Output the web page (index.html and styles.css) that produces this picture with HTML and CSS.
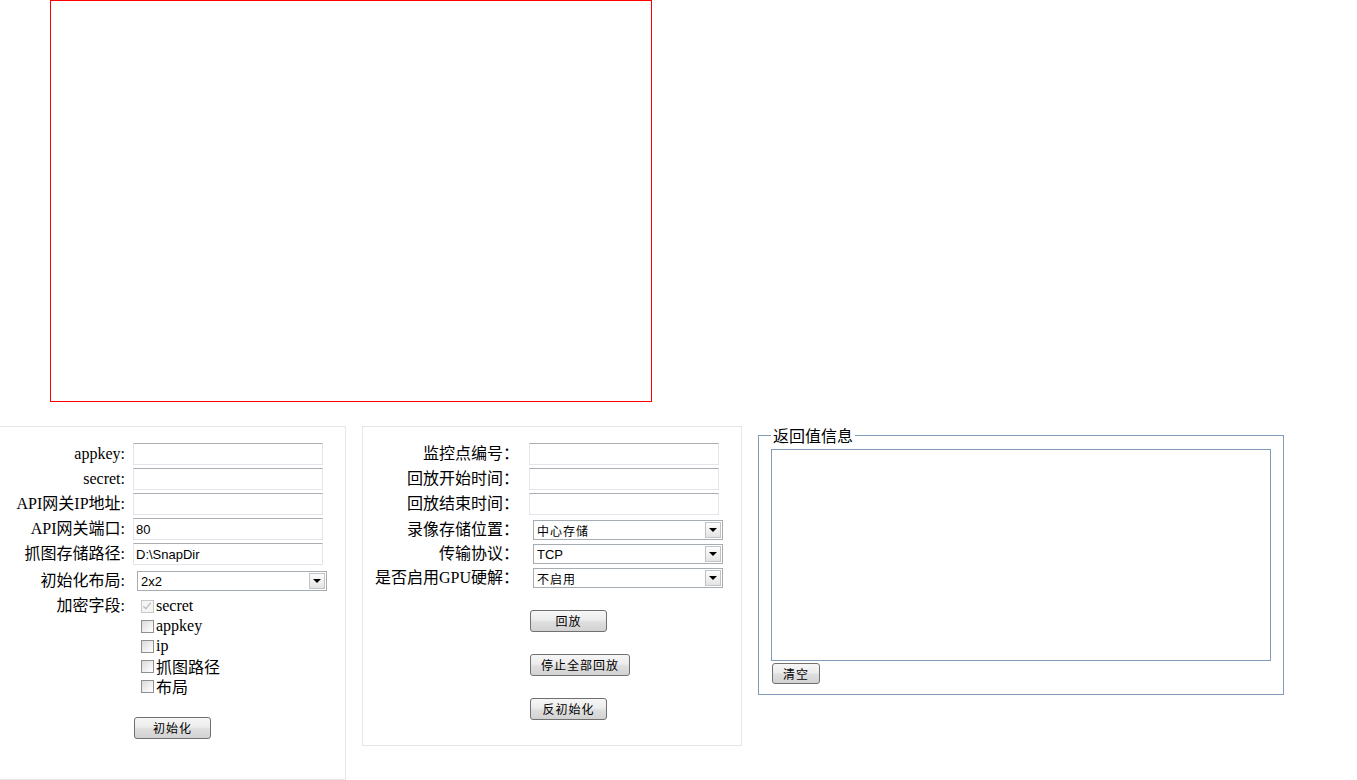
FILE: index.html
```html
<!DOCTYPE html>
<html lang="zh-CN">
<head>
<meta charset="utf-8">
<title>视频回放</title>
<link rel="stylesheet" href="styles.css">
</head>
<body>
<div class="player"></div>
<div class="controls">
  <section class="panel panel-init">
    <div class="row"><label class="lbl">appkey:</label><input class="txt" type="text"></div>
    <div class="row"><label class="lbl">secret:</label><input class="txt" type="text"></div>
    <div class="row"><label class="lbl">API网关IP地址:</label><input class="txt" type="text"></div>
    <div class="row"><label class="lbl">API网关端口:</label><input class="txt" type="text" value="80"></div>
    <div class="row"><label class="lbl">抓图存储路径:</label><input class="txt" type="text" value="D:\SnapDir"></div>
    <div class="row row-select"><label class="lbl">初始化布局:</label><span class="sel"><select><option>2x2</option></select></span></div>
    <div class="row row-checks"><label class="lbl">加密字段:</label>
      <div class="checks">
        <label class="chk"><input type="checkbox" checked disabled><span>secret</span></label>
        <label class="chk"><input type="checkbox"><span>appkey</span></label>
        <label class="chk"><input type="checkbox"><span>ip</span></label>
        <label class="chk"><input type="checkbox"><span>抓图路径</span></label>
        <label class="chk"><input type="checkbox"><span>布局</span></label>
      </div>
    </div>
    <div class="row row-btn"><span></span><button class="btn">初始化</button></div>
  </section>

  <section class="panel panel-play">
    <div class="row"><label class="lbl">监控点编号：</label><input class="txt" type="text"></div>
    <div class="row"><label class="lbl">回放开始时间：</label><input class="txt" type="text"></div>
    <div class="row"><label class="lbl">回放结束时间：</label><input class="txt" type="text"></div>
    <div class="row row-select"><label class="lbl">录像存储位置：</label><span class="sel"><select class="cjk"><option>中心存储</option></select></span></div>
    <div class="row row-select"><label class="lbl">传输协议：</label><span class="sel"><select><option>TCP</option></select></span></div>
    <div class="row row-select"><label class="lbl">是否启用GPU硬解：</label><span class="sel"><select class="cjk"><option>不启用</option></select></span></div>
    <div class="row row-btn first"><span></span><button class="btn">回放</button></div>
    <div class="row row-btn"><span></span><button class="btn">停止全部回放</button></div>
    <div class="row row-btn"><span></span><button class="btn">反初始化</button></div>
  </section>

  <fieldset class="result">
    <legend>返回值信息</legend>
    <textarea class="log"></textarea>
    <button class="btn btn-clear">清空</button>
  </fieldset>
</div>
</body>
</html>
```
FILE: styles.css
```css
html, body {
  margin: 0;
  padding: 0;
  background: #ffffff;
}
body {
  font-family: "Liberation Serif", "Noto Sans CJK SC", serif;
  font-size: 16px;
  color: #000;
}
.player {
  width: 600px;
  height: 400px;
  margin-left: 50px;
  border: 1px solid #ff0000;
}
.controls {
  display: flex;
  align-items: flex-start;
  gap: 16px;
  margin-top: 24px;
}
.panel {
  box-sizing: border-box;
  border: 1px solid #e6e6e6;
  padding-top: 16px;
}
.panel-init {
  width: 346px;
  height: 354px;
  border-left: 0;
}
.panel-play {
  width: 380px;
  height: 320px;
}
.row {
  display: grid;
  align-items: center;
  height: 22px;
  margin-top: 3px;
}
.row:first-child { margin-top: 0; }
.panel-init .row {
  grid-template-columns: 125px 1fr;
  column-gap: 8px;
}
.panel-play .row {
  grid-template-columns: 166px 1fr;
  column-gap: 0;
}
.lbl {
  text-align: right;
  white-space: nowrap;
  line-height: 20px;
}
.panel-play .lbl {
  padding-right: 10px;
}
.txt {
  box-sizing: border-box;
  width: 190px;
  height: 22px;
  margin: 0;
  padding: 0 2px;
  border: 1px solid #e2e6ec;
  border-top-color: #abadb3;
  font-family: "Liberation Sans", Arial, sans-serif;
  font-size: 13px;
  color: #000;
  outline: none;
}
.panel-init .row-select {
  margin-top: 6px;
  height: 20px;
}
.panel-play .row-select {
  height: 24px;
  margin-top: 0;
}
.panel-play .row-select:nth-child(4) { margin-top: 3px; }
.sel {
  position: relative;
  display: inline-block;
  width: 190px;
  height: 20px;
  margin-left: 4px;
}
.sel select {
  box-sizing: border-box;
  appearance: none;
  -webkit-appearance: none;
  width: 190px;
  height: 20px;
  margin: 0;
  padding: 0 0 0 3px;
  border: 1px solid #a5acb2;
  border-radius: 0;
  background: #fff;
  font-family: "Liberation Sans", Arial, sans-serif;
  font-size: 13px;
  color: #000;
  outline: none;
}
.sel select.cjk {
  font-family: "Noto Sans CJK SC", sans-serif;
  font-size: 12px;
  letter-spacing: 1px;
}
.sel::after {
  content: "";
  position: absolute;
  top: 2px;
  right: 2px;
  width: 14px;
  height: 14px;
  border: 1px solid #c3c3c3;
  background: linear-gradient(#fdfdfd, #e4e4e4);
  pointer-events: none;
}
.sel::before {
  content: "";
  position: absolute;
  z-index: 1;
  top: 8px;
  right: 6px;
  width: 0;
  height: 0;
  border-left: 4px solid transparent;
  border-right: 4px solid transparent;
  border-top: 4px solid #000;
  pointer-events: none;
}
.panel-init .row-checks {
  height: auto;
  align-items: start;
  margin-top: 5px;
}
.checks {
  display: flex;
  flex-direction: column;
}
.chk {
  display: flex;
  align-items: center;
  height: 20px;
}
.chk input {
  appearance: none;
  -webkit-appearance: none;
  position: relative;
  box-sizing: border-box;
  width: 13px;
  height: 13px;
  margin: 0 2px 0 8px;
  border: 1px solid #8f8f8f;
  background: linear-gradient(135deg, #d9d9d9, #f6f6f6 70%, #ffffff);
}
.chk input:checked {
  border-color: #c8c8c8;
  background: #f4f4f4;
}
.chk input:checked::after {
  content: "";
  position: absolute;
  left: 3px;
  top: 0px;
  width: 3px;
  height: 7px;
  border-right: 1.5px solid #b0b0b0;
  border-bottom: 1.5px solid #b0b0b0;
  transform: rotate(40deg);
}
.btn {
  box-sizing: border-box;
  min-width: 77px;
  height: 22px;
  margin: 0 0 0 1px;
  padding: 0 10px;
  border: 1px solid #707070;
  border-radius: 3px;
  background: linear-gradient(#f6f6f6, #ececec 45%, #dedede 55%, #d2d2d2);
  font-family: "Noto Sans CJK SC", sans-serif;
  font-size: 12px;
  letter-spacing: 1px;
  line-height: 20px;
  color: #000;
  justify-self: start;
}
.panel-init .row-btn { margin-top: 21px; }
.panel-play .row-btn { margin-top: 22px; }
.panel-play .row-btn.first { margin-top: 20px; }
.result {
  box-sizing: border-box;
  width: 526px;
  margin: 0;
  padding: 5px 12px 10px 12px;
  border: 1px solid #7f9db9;
}
.result legend {
  padding: 0 2px;
  font-family: "Noto Sans CJK SC", sans-serif;
  font-size: 16px;
  line-height: 18px;
}
.log {
  display: block;
  box-sizing: border-box;
  width: 500px;
  height: 212px;
  margin: 0;
  border: 1px solid #7f9db9;
  resize: none;
  outline: none;
}
.btn-clear {
  display: block;
  min-width: 0;
  height: 21px;
  margin-top: 2px;
}
```
